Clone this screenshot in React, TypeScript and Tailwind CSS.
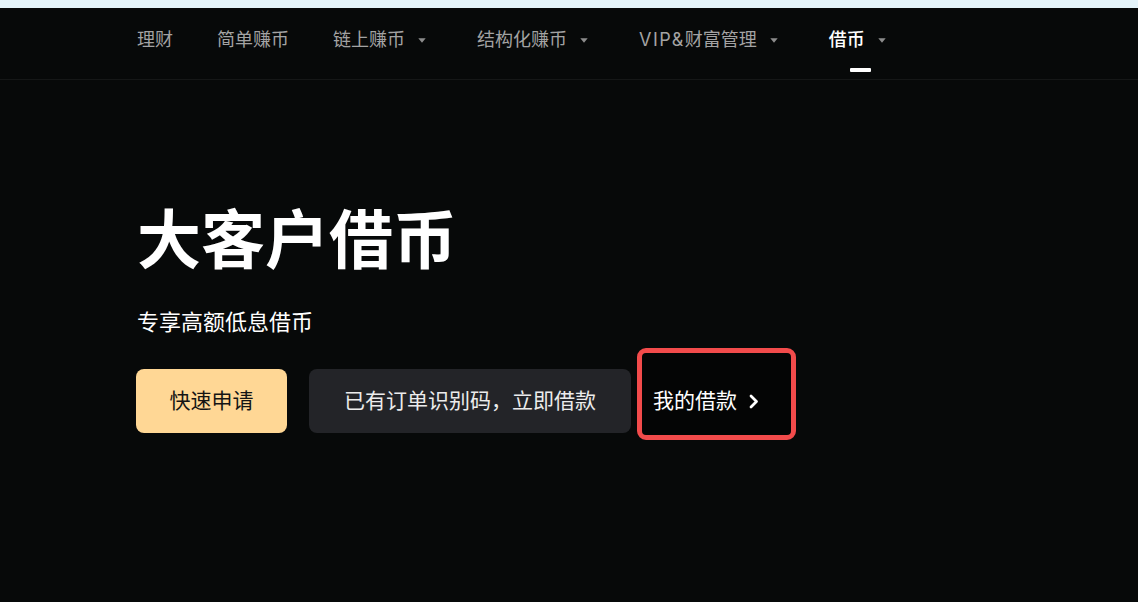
import React from "react";

const Caret = () => (
  <svg width="8" height="5" viewBox="0 0 8 5" className="ml-[13px] mr-[7px] shrink-0">
    <path d="M0.3 0.3 L7.7 0.3 L4 4.8 Z" fill="#8c8c8c" />
  </svg>
);

const items: { label: React.ReactNode; key: string; caret: boolean; active?: boolean }[] = [
  { key: "a", label: "理财", caret: false },
  { key: "b", label: "简单赚币", caret: false },
  { key: "c", label: "链上赚币", caret: true },
  { key: "d", label: "结构化赚币", caret: true },
  {
    key: "e",
    label: (
      <>
        <span className="tracking-[1.5px]">VIP&amp;</span>财富管理
      </>
    ),
    caret: true,
  },
  { key: "f", label: "借币", caret: true, active: true },
];

export default function App() {
  return (
    <div
      className="w-full h-[602px] bg-[#070909] overflow-hidden flex flex-col"
      style={{ fontFamily: 'Inter, "Noto Sans CJK SC", sans-serif' }}
    >
      <div className="h-2 bg-[#e4f3f9] shrink-0" />
      <nav className="h-[72px] shrink-0 border-b border-[#151717] flex items-start pl-[137px] pt-[18px] gap-[44px]">
        {items.map((it) => (
          <div key={it.key} className="relative flex items-center h-[28px]">
            <span
              className={
                "text-[18px] leading-[28px] " +
                (it.active ? "text-white font-medium" : "text-[#a3a3a3]")
              }
            >
              {it.label}
            </span>
            {it.caret && <Caret />}
            {it.active && (
              <div className="absolute left-[21px] top-[42px] w-[21px] h-[4px] rounded-[1px] bg-white" />
            )}
          </div>
        ))}
      </nav>

      <main className="pl-[137px] pt-[128px] flex flex-col">
        <h1 className="text-[64px] leading-[64px] font-bold text-white">大客户借币</h1>
        <p className="mt-[34px] text-[22px] leading-[32px] font-normal text-white">专享高额低息借币</p>
        <div className="mt-[31px] flex items-center -ml-px">
          <button className="w-[151px] h-[64px] rounded-[8px] bg-[#ffd795] text-[#141414] text-[21px] flex items-center justify-center">
            快速申请
          </button>
          <button className="ml-[22px] w-[322px] h-[64px] rounded-[8px] bg-[#232428] text-[#ececec] text-[21px] flex items-center justify-center">
            已有订单识别码，立即借款
          </button>
          <div className="relative ml-[22px] h-[64px] flex items-center">
            <div className="absolute left-[-16px] top-[-21px] w-[159px] h-[92px] rounded-[9px] border-[5px] border-[#f24b4b] bg-[#040505]" />
            <span className="relative text-[21px] font-normal text-white">我的借款</span>
            <svg width="12" height="15" viewBox="0 0 12 15" className="relative ml-[11px]">
              <path d="M3 2 L8.5 7.5 L3 13" fill="none" stroke="white" strokeWidth="2.8" strokeLinecap="round" strokeLinejoin="round" />
            </svg>
          </div>
        </div>
      </main>
    </div>
  );
}
